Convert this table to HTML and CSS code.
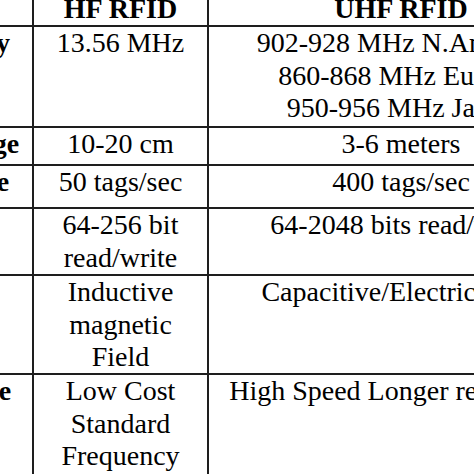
FILE: index.html
```html
<!DOCTYPE html>
<html>
<head>
<meta charset="utf-8">
<link rel="stylesheet" href="styles.css">
</head>
<body>
<div class="frame">
  <div class="table">
    <div class="cell head label">Feature</div>
    <div class="cell head">HF RFID</div>
    <div class="cell head">UHF RFID</div>

    <div class="cell label">Frequency</div>
    <div class="cell">13.56 MHz</div>
    <div class="cell">902-928 MHz N.America<br>860-868 MHz Europe<br>950-956 MHz Japan</div>

    <div class="cell label">Read Range</div>
    <div class="cell">10-20 cm</div>
    <div class="cell">3-6 meters</div>

    <div class="cell label">Read Rate</div>
    <div class="cell">50 tags/sec</div>
    <div class="cell">400 tags/sec</div>

    <div class="cell label">Memory</div>
    <div class="cell">64-256 bit read/write</div>
    <div class="cell">64-2048 bits read/write</div>

    <div class="cell label">Method</div>
    <div class="cell">Inductive magnetic Field</div>
    <div class="cell">Capacitive/Electric Field</div>

    <div class="cell label">Advantage</div>
    <div class="cell">Low Cost Standard Frequency</div>
    <div class="cell">High Speed Longer read range</div>
  </div>
</div>
</body>
</html>
```

FILE: styles.css
```css
html, body {
  margin: 0;
  padding: 0;
  overflow: hidden;
  background: #ffffff;
}

.frame {
  width: 474px;
  height: 474px;
  overflow: hidden;
}

.table {
  display: inline-grid;
  grid-template-columns: 171px 173px 384px;
  grid-template-rows: 32px 99px 36px 41px 65px 97px 120px;
  gap: 2px;
  padding: 2px;
  background: #1e1e1e;
  margin-left: -141px;
  margin-top: -9px;
  font-family: "Liberation Serif", "Times New Roman", serif;
  font-size: 28px;
  line-height: 32.5px;
  color: #000000;
}

.cell {
  background: #ffffff;
  text-align: center;
  padding: 0 6px;
  overflow: hidden;
}

.head,
.label {
  font-weight: bold;
  padding: 0;
  overflow: visible;
  white-space: nowrap;
}
```
